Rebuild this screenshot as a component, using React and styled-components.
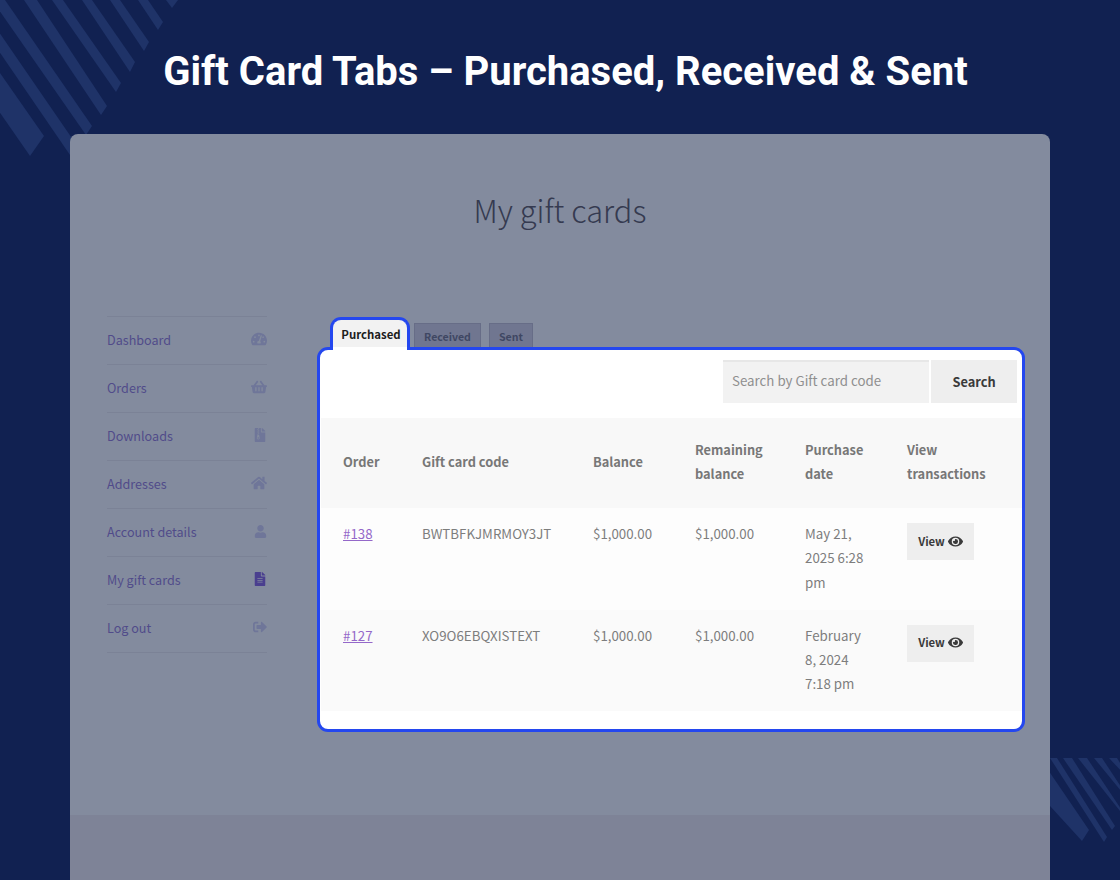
import React from "react";
import styled, { createGlobalStyle } from "styled-components";
import {
  FaTachometerAlt,
  FaShoppingBasket,
  FaFileArchive,
  FaHome,
  FaUser,
  FaFileAlt,
  FaSignOutAlt,
  FaEye,
} from "react-icons/fa";

const Global = createGlobalStyle`
  html, body { margin: 0; padding: 0; background: #112151; }
  * { box-sizing: border-box; }
`;

const SOURCE = `"Noto Sans CJK SC", "Noto Sans", sans-serif`;

const Page = styled.div`
  position: relative;
  width: 1120px;
  height: 880px;
  overflow: hidden;
  background: #112151;
  display: flex;
  flex-direction: column;
  align-items: center;
`;

const Deco = styled.svg`
  position: absolute;
  top: ${(p) => p.$top}px;
  left: ${(p) => p.$left}px;
  fill: #1f3368;
`;

const Header = styled.header`
  position: relative;
  height: 134px;
  flex: none;
  padding: 10px 0 0 11px;
  display: flex;
  align-items: center;
  justify-content: center;
  width: 100%;
`;

const Title = styled.h1`
  margin: 0;
  font-family: Roboto, sans-serif;
  font-weight: 700;
  font-size: 40px;
  line-height: 48px;
  color: #ffffff;
`;

const Card = styled.main`
  position: relative;
  width: 980px;
  flex: 1;
  min-height: 0;
  background: #838b9e;
  border-radius: 8px 8px 0 0;
  display: flex;
  flex-direction: column;
  font-family: ${SOURCE};
`;

const PageTitle = styled.h2`
  margin: 0;
  padding-top: 52px;
  height: 182px;
  flex: none;
  text-align: center;
  font-weight: 300;
  font-size: 30.8px;
  line-height: 48px;
  color: #353a50;
`;

const Columns = styled.div`
  display: flex;
  align-items: flex-start;
  padding-left: 37px;
  gap: 50px;
  flex: none;
`;

const Nav = styled.nav`
  width: 160px;
  flex: none;
  border-top: 1px solid #7b8296;
`;

const NavRow = styled.a`
  display: flex;
  align-items: center;
  justify-content: space-between;
  height: 48px;
  padding-bottom: 3px;
  border-bottom: 1px solid #7b8296;
  font-size: 12.6px;
  color: #514b8a;
`;

const NavIcon = styled.span`
  display: flex;
  width: 16px;
  justify-content: flex-end;
  font-size: ${(p) => p.$size || 15}px;
  color: ${(p) => (p.$active ? "#4a3f8f" : "#6f7699")};
`;

const Main = styled.section`
  width: 708px;
  flex: none;
  margin-top: 1px;
`;

const Tabs = styled.div`
  display: flex;
  align-items: flex-end;
  padding-left: 13px;
  position: relative;
  z-index: 2;
  height: 30px;
`;

const ActiveTab = styled.div`
  width: 80px;
  height: 33px;
  margin-bottom: -3px;
  margin-right: 4px;
  padding-left: 2px;
  border: 3px solid #2447ef;
  border-bottom: 0;
  border-radius: 11px 11px 0 0;
  background: linear-gradient(#f2f2f2 27px, #ffffff 27px);
  font-size: 11.4px;
  font-weight: 700;
  line-height: 28px;
  text-align: center;
  color: #1c1c1c;
`;

const Tab = styled.div`
  width: ${(p) => p.$width}px;
  height: 24px;
  margin-right: 8px;
  background: #707690;
  border: 1px solid #676d87;
  border-bottom: 0;
  font-size: 10.6px;
  font-weight: 700;
  line-height: 25px;
  text-align: center;
  color: #3f4763;
`;

const Panel = styled.div`
  position: relative;
  height: 385px;
  background: #ffffff;
  border: 3px solid #2447ef;
  border-radius: 11px;
  padding: 10px 0 0 1px;
`;

const SearchForm = styled.form`
  display: flex;
  justify-content: flex-end;
  gap: 2px;
  padding-right: 5px;
  margin-bottom: 15px;
`;

const SearchInput = styled.div`
  width: 206px;
  height: 43px;
  padding: 0 9px;
  background: #f2f2f2;
  border-top: 2px solid #e7e7e7;
  font-size: 13.3px;
  line-height: 38px;
  color: #8f8f8f;
`;

const SearchButton = styled.div`
  width: 86px;
  height: 43px;
  background: #eeeeee;
  font-size: 12.8px;
  font-weight: 700;
  line-height: 43px;
  text-align: center;
  color: #3a3a3a;
`;

const Table = styled.table`
  width: 100%;
  table-layout: fixed;
  border-collapse: collapse;
  font-size: 13.3px;
  line-height: 24.4px;
`;

const HeadCell = styled.th`
  padding: 20px 6px 21.2px 22px;
  background: #f8f8f8;
  text-align: left;
  font-weight: 600;
  font-size: 12.8px;
  color: #777777;
`;

const Cell = styled.td`
  padding: 14px 12px 14.4px 22px;
  vertical-align: top;
  background: ${(p) => (p.$odd ? "#fdfdfd" : "#fafafa")};
  color: #7d7d7d;
`;

const OrderLink = styled.a`
  color: #9468c9;
  text-decoration: underline;
`;

const ViewButton = styled.div`
  display: inline-flex;
  align-items: center;
  justify-content: center;
  gap: 3px;
  width: 67px;
  height: 37px;
  margin-top: 1px;
  padding-bottom: 1px;
  background: #eeeeee;
  font-size: 11.3px;
  font-weight: 600;
  color: #3a3a3a;
`;

const Footer = styled.footer`
  margin-top: auto;
  height: 65px;
  flex: none;
  background: #7e8397;
`;

const widths = [79, 171, 102, 110, 102, 137];
const heads = ["Order", "Gift card code", "Balance", "Remaining balance", "Purchase date", "View transactions"];
const rows = [
  { order: "#138", code: "BWTBFKJMRMOY3JT", balance: "$1,000.00", left: "$1,000.00", date: "May 21, 2025 6:28 pm" },
  { order: "#127", code: "XO9O6EBQXISTEXT", balance: "$1,000.00", left: "$1,000.00", date: "February 8, 2024 7:18 pm" },
];
const nav = [
  ["Dashboard", FaTachometerAlt, 16],
  ["Orders", FaShoppingBasket, 16],
  ["Downloads", FaFileArchive, 14],
  ["Addresses", FaHome, 16],
  ["Account details", FaUser, 13],
  ["My gift cards", FaFileAlt, 14, true],
  ["Log out", FaSignOutAlt, 14],
];

const topStripes = [
  "-51,0 44,136 30,156 -78,0",
  "-23,0 78,147 70,155 -36,0",
  "5,0 92,126 86,135 -8,0",
  "37,0 107,106 101,115 24,0",
  "63,0 121,83 116,92 52,0",
  "92,0 135,62 130,72 82,0",
  "120,0 149,42 144,51 110,0",
  "148,0 163,22 158,30 138,0",
  "178,0 172,8 166,0",
];
const bottomStripes = [
  "-10,0 39,72 32,83 -10,37",
  "7,0 57,79 54,84 0,0",
  "22,0 65,68 62,72 13,0",
  "37,0 85,72 28,0",
  "52,0 85,50 44,0",
  "67,0 85,28 59,0",
];

export default function App() {
  return (
    <Page>
      <Global />
      <Deco $top={0} $left={0} width="180" height="160" viewBox="0 0 180 160">
        {topStripes.map((s) => (
          <polygon key={s} points={s} />
        ))}
      </Deco>
      <Deco $top={758} $left={1050} width="70" height="90" viewBox="0 0 70 90">
        {bottomStripes.map((s) => (
          <polygon key={s} points={s} />
        ))}
      </Deco>
      <Header>
        <Title>Gift Card Tabs – Purchased, Received &amp; Sent</Title>
      </Header>
      <Card>
        <PageTitle>My gift cards</PageTitle>
        <Columns>
          <Nav>
            {nav.map(([label, Icon, size, active]) => (
              <NavRow key={label}>
                {label}
                <NavIcon $size={size} $active={active}>
                  <Icon />
                </NavIcon>
              </NavRow>
            ))}
          </Nav>
          <Main>
            <Tabs>
              <ActiveTab>Purchased</ActiveTab>
              <Tab $width={67}>Received</Tab>
              <Tab $width={44}>Sent</Tab>
            </Tabs>
            <Panel>
              <SearchForm>
                <SearchInput>Search by Gift card code</SearchInput>
                <SearchButton>Search</SearchButton>
              </SearchForm>
              <Table>
                <colgroup>
                  {widths.map((w, i) => (
                    <col key={i} width={w} />
                  ))}
                </colgroup>
                <thead>
                  <tr>
                    {heads.map((h) => (
                      <HeadCell key={h}>{h}</HeadCell>
                    ))}
                  </tr>
                </thead>
                <tbody>
                  {rows.map((r, i) => (
                    <tr key={r.order}>
                      <Cell $odd={i === 0}>
                        <OrderLink>{r.order}</OrderLink>
                      </Cell>
                      <Cell $odd={i === 0}>{r.code}</Cell>
                      <Cell $odd={i === 0}>{r.balance}</Cell>
                      <Cell $odd={i === 0}>{r.left}</Cell>
                      <Cell $odd={i === 0}>{r.date}</Cell>
                      <Cell $odd={i === 0}>
                        <ViewButton>
                          View <FaEye size={15} />
                        </ViewButton>
                      </Cell>
                    </tr>
                  ))}
                </tbody>
              </Table>
            </Panel>
          </Main>
        </Columns>
        <Footer />
      </Card>
    </Page>
  );
}
